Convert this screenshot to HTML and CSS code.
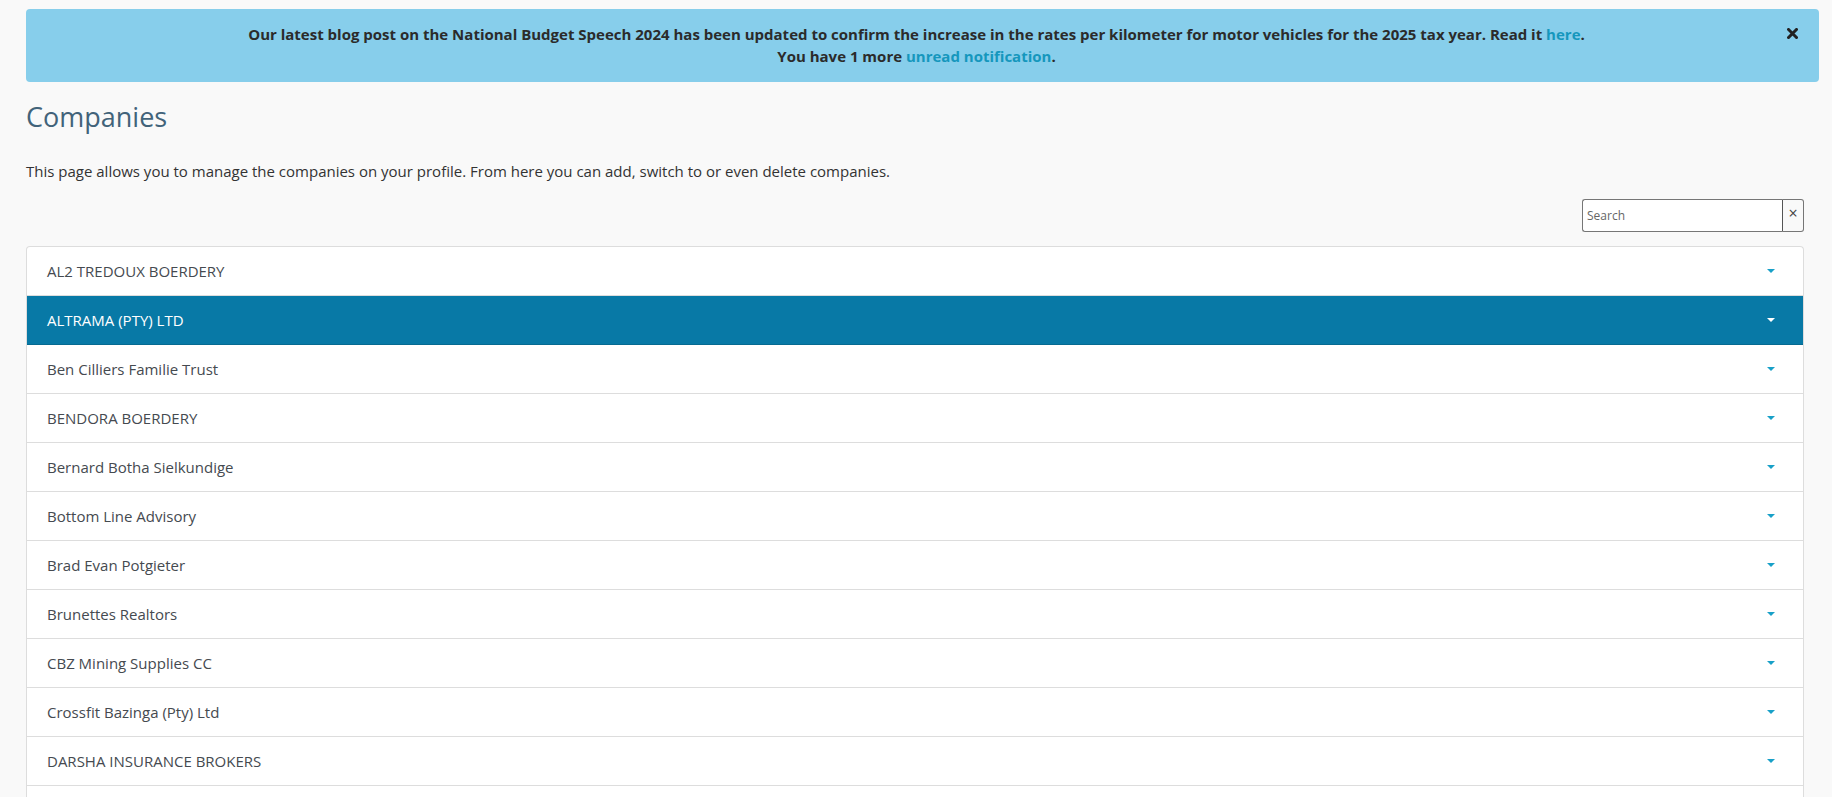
FILE: index.html
```html
<!DOCTYPE html>
<html lang="en">

<head>
    <meta charset="UTF-8">
    <meta name="viewport" content="width=device-width, initial-scale=1.0">
    <title>Companies</title>
    <link rel="stylesheet" href="styles.css">
</head>

<body>
    <div class="alert">
        <button class="alert_close" type="button" aria-label="Close">
            <svg width="11" height="11" viewBox="0 0 11 11">
                <path d="M1.5 1.5 L9.5 9.5 M9.5 1.5 L1.5 9.5" stroke="#222" stroke-width="3" stroke-linecap="square" fill="none"/>
            </svg>
        </button>
        <div>Our latest blog post on the National Budget Speech 2024 has been updated to confirm the increase in the rates per kilometer for motor vehicles for the 2025 tax year. Read it <a href="#">here</a>.</div>
        <div>You have 1 more <a href="#">unread notification</a>.</div>
    </div>

    <div class="content">
        <h2 class="title">Companies</h2>
        <p class="intro">This page allows you to manage the companies on your profile. From here you can add, switch to or even delete companies.</p>

        <div class="search_bar">
            <div class="search_group">
                <input type="text" placeholder="Search">
                <button type="button" class="search_clear">&times;</button>
            </div>
        </div>

        <div class="company_list">
            <div class="company_row"><span>AL2 TREDOUX BOERDERY</span><i class="caret"></i></div>
            <div class="company_row active"><span>ALTRAMA (PTY) LTD</span><i class="caret"></i></div>
            <div class="company_row"><span>Ben Cilliers Familie Trust</span><i class="caret"></i></div>
            <div class="company_row"><span>BENDORA BOERDERY</span><i class="caret"></i></div>
            <div class="company_row"><span>Bernard Botha Sielkundige</span><i class="caret"></i></div>
            <div class="company_row"><span>Bottom Line Advisory</span><i class="caret"></i></div>
            <div class="company_row"><span>Brad Evan Potgieter</span><i class="caret"></i></div>
            <div class="company_row"><span>Brunettes Realtors</span><i class="caret"></i></div>
            <div class="company_row"><span>CBZ Mining Supplies CC</span><i class="caret"></i></div>
            <div class="company_row"><span>Crossfit Bazinga (Pty) Ltd</span><i class="caret"></i></div>
            <div class="company_row"><span>DARSHA INSURANCE BROKERS</span><i class="caret"></i></div>
            <div class="company_row"></div>
        </div>
    </div>
</body>

</html>
```

FILE: styles.css
```css
* {
    box-sizing: border-box;
}

body {
    margin: 0;
    background: #f9f9f9;
    color: #333;
    font-family: 'Open Sans', 'Noto Sans', 'Liberation Sans', Arial, sans-serif;
    font-size: 15px;
}

a {
    color: #1597bd;
    text-decoration: none;
}

.alert {
    position: relative;
    margin: 9px 13px 0 26px;
    padding: 14px 27px 15px 15px;
    background: #87ceeb;
    border-radius: 4px;
    text-align: center;
    font-weight: bold;
    font-size: 15px;
    line-height: 22px;
    color: #2b2b2b;
}

.alert_close {
    position: absolute;
    top: 19px;
    right: 21px;
    width: 11px;
    height: 11px;
    padding: 0;
    border: 0;
    background: none;
    display: flex;
}

.content {
    padding: 0 28px 0 26px;
}

.title {
    margin: 18px 0 0;
    font-size: 27px;
    font-weight: 500;
    line-height: 34px;
    color: #42637a;
}

.intro {
    margin: 27px 0 0;
    font-size: 15px;
    line-height: 20px;
}

.search_bar {
    display: flex;
    justify-content: flex-end;
    margin-top: 18px;
}

.search_group {
    display: flex;
    height: 33px;
}

.search_group input {
    width: 200px;
    height: 33px;
    padding: 0 4px;
    border: 1px solid #767676;
    border-right: 0;
    border-radius: 3px 0 0 3px;
    background: #fff;
    font-family: inherit;
    font-size: 12px;
    color: #333;
}

.search_group input::placeholder {
    color: #666;
}

.search_group input:focus {
    outline: 0;
}

.search_clear {
    width: 22px;
    height: 33px;
    padding: 0 0 5px;
    border: 1px solid #767676;
    border-left: 1px solid #555;
    border-radius: 0 3px 3px 0;
    background: #f9f9f9;
    color: #444;
    font-family: inherit;
    font-size: 16px;
    line-height: 1;
}

.company_list {
    margin-top: 14px;
    border: 1px solid #ddd;
    border-bottom: 0;
    border-radius: 4px 4px 0 0;
    background: #fff;
    overflow: hidden;
}

.company_row {
    display: flex;
    align-items: center;
    justify-content: space-between;
    height: 49px;
    padding: 0 28px 0 20px;
    border-bottom: 1px solid #ddd;
    font-size: 15px;
    color: #454a50;
}

.company_row.active {
    background: #0879a6;
    border-bottom-color: #066a91;
    color: #fff;
}

.caret {
    width: 0;
    height: 0;
    border-top: 4px solid #18a0c8;
    border-left: 4px solid transparent;
    border-right: 4px solid transparent;
}

.company_row.active .caret {
    border-top-color: #fff;
}
```
